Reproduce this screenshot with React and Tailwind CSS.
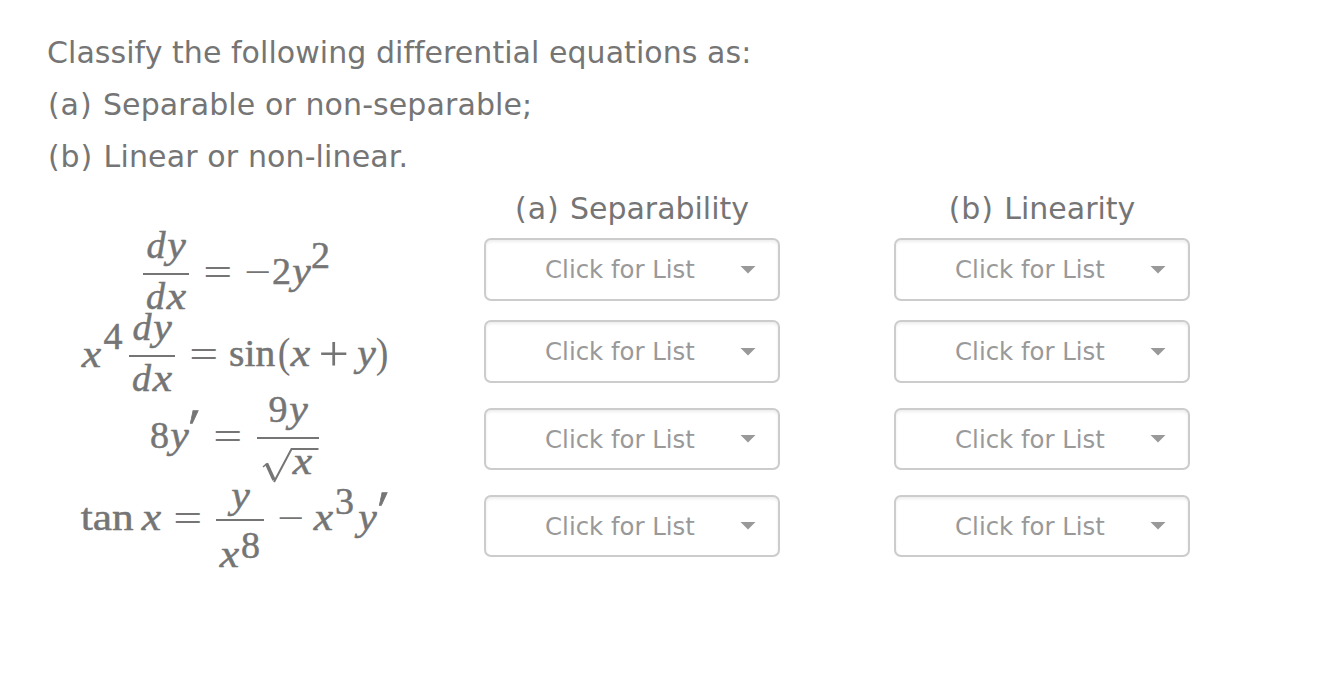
import React from "react";

function Glyph({ className = "", textClassName = "", children }) {
  return (
    <span className={`flex h-[38px] shrink-0 justify-center whitespace-pre leading-[41px] ${className}`}>
      <span className={`block shrink-0 ${textClassName}`}>{children}</span>
    </span>
  );
}

function X({ className = "" }) {
  return <Glyph className={`w-[19px] italic ${className}`} textClassName="scale-x-[1.15]">x</Glyph>;
}

function Y({ className = "" }) {
  return <Glyph className={`w-[18px] italic ${className}`} textClassName="scale-x-110">y</Glyph>;
}

function Equals({ className = "" }) {
  return (
    <Glyph className={`mt-px w-[26px] [-webkit-text-stroke:0px] ${className}`} textClassName="scale-x-[1.35]">=</Glyph>
  );
}

function Minus({ className = "" }) {
  return (
    <Glyph className={`mt-px w-[23px] [-webkit-text-stroke:0px] ${className}`} textClassName="scale-x-[1.25]">−</Glyph>
  );
}

function Prime({ className = "" }) {
  return (
    <Glyph className={`w-[9px] text-[54px] italic [-webkit-text-stroke:0.8px] ${className}`} textClassName="-skew-x-6">′</Glyph>
  );
}

function Fraction({ className = "", top, bottom }) {
  return (
    <span className={`-mt-[26px] flex shrink-0 flex-col ${className}`}>
      <span className="mb-[10px] flex h-[38px] justify-center">{top}</span>
      <span className="h-[2px] bg-[#757575]" />
      <span className="mt-px flex h-[38px] justify-center">{bottom}</span>
    </span>
  );
}

function Derivative({ className = "" }) {
  return (
    <Fraction
      className={`w-[46px] ${className}`}
      top={<><Glyph className="w-[19px] italic">d</Glyph><Y className="ml-[2px]" /></>}
      bottom={<><Glyph className="w-[19px] italic">d</Glyph><X className="ml-[2px]" /></>}
    />
  );
}

function Equation({ className = "", children }) {
  return (
    <div className={`flex w-[379px] shrink-0 items-start font-['Liberation_Serif',serif] text-[38px] text-[#757575] [-webkit-text-stroke:0.5px_#757575] ${className}`}>
      {children}
    </div>
  );
}

function Part({ children }) {
  return <span className="tracking-[0.9px]">{children} </span>;
}

function Select({ className = "h-[63px]" }) {
  return (
    <div className="flex w-[410px] shrink-0 justify-center pt-1">
      <button
        type="button"
        className={`flex w-[296px] items-center rounded-[7px] border-2 border-[#cccccc] bg-white pl-[59px] text-[24.4px] text-[#999999] shadow-[inset_0_2px_3px_rgba(0,0,0,0.07)] ${className}`}
      >
        <span className="w-[150px] whitespace-nowrap pt-[2px] text-center">Click for List</span>
        <svg className="ml-[45px] h-[8px] w-[16px]" viewBox="0 0 16 8" fill="#999999">
          <path d="M0.5 0H15.5L8 7.5Z" />
        </svg>
      </button>
    </div>
  );
}

function Row({ className = "", selectClassName, children }) {
  return (
    <div className={`flex items-start ${className}`}>
      {children}
      <Select className={selectClassName} />
      <Select className={selectClassName} />
    </div>
  );
}

export default function App() {
  return (
    <main className="h-[690px] w-[1332px] overflow-hidden bg-white pl-12 pt-[27px] font-['DejaVu_Sans',sans-serif] text-[#757575]">
      <div className="-mb-px text-[30px] leading-[52px]">
        <p className="-ml-px whitespace-nowrap tracking-[0.05px]">Classify the following differential equations as:</p>
        <p className="tracking-[0.1px]"><Part>(a)</Part>Separable or non-separable;</p>
        <p className="tracking-[0.13px]"><Part>(b)</Part>Linear or non-linear.</p>
        <div className="flex pl-[379px] text-center tracking-[-0.02px]">
          <div className="w-[410px]"><Part>(a)</Part>Separability</div>
          <div className="w-[410px]"><Part>(b)</Part>Linearity</div>
        </div>
      </div>

      <Row className="h-[82px]">
        <Equation className="pl-[95px] pt-[17px]">
          <Derivative />
          <Equals className="ml-4" />
          <Minus className="ml-[15px]" />
          <Glyph className="ml-1 w-[17px]">2</Glyph>
          <Y className="ml-[2px]" />
          <Glyph className="-mt-4 ml-[2px] w-[17px]">2</Glyph>
        </Equation>
      </Row>

      <Row className="h-[88px]">
        <Equation className="pl-[34px] pt-[17px]">
          <X className="mt-px" />
          <Glyph className="-mt-[17px] ml-[3px] w-[18px]">4</Glyph>
          <Derivative className="ml-[7px]" />
          <Equals className="ml-4" />
          <Glyph className="ml-[12px] w-[47px]" textClassName="scale-x-[1.04]">sin</Glyph>
          <Glyph className="ml-[3px] w-[10px] [-webkit-text-stroke:0px]" textClassName="scale-y-110">(</Glyph>
          <X className="ml-[2px]" />
          <Glyph className="ml-[11px] w-[26px] [-webkit-text-stroke:0px]" textClassName="scale-x-[1.42] scale-y-[1.35]">+</Glyph>
          <Y className="ml-[10px]" />
          <Glyph className="ml-[2px] w-[10px] [-webkit-text-stroke:0px]" textClassName="scale-y-110">)</Glyph>
        </Equation>
      </Row>

      <Row className="h-[87px]" selectClassName="h-[62px]">
        <Equation className="pl-[103px] pt-[11px]">
          <Glyph className="w-[17px]">8</Glyph>
          <Y className="ml-[2px]" />
          <Prime className="-mt-[7px] -ml-[3px] mr-[5px]" />
          <Equals className="ml-4" />
          <Fraction
            className="ml-4 w-[62px]"
            top={<><Glyph className="ml-px w-[17px]">9</Glyph><Y className="ml-[3px]" /></>}
            bottom={
              <span className="flex w-[62px] items-start pl-[5px]">
                <svg className="mt-[5px] h-[38px] w-[57px] shrink-0" viewBox="0 0 57 38" fill="none" stroke="#757575">
                  <path d="M1 22L5 18.5" strokeWidth="1.5" />
                  <path d="M4.5 18.5L12 35" strokeWidth="3.5" />
                  <path d="M12 37L29.5 4H56.5" strokeWidth="2" />
                </svg>
                <X className="-ml-[26px] mt-px" />
              </span>
            }
          />
        </Equation>
      </Row>

      <Row className="h-[82px]" selectClassName="h-[62px]">
        <Equation className="pl-[33px] pt-[6px]">
          <Glyph className="w-[53px]" textClassName="scale-x-[1.14]">tan</Glyph>
          <X className="ml-[8px]" />
          <Equals className="ml-[14px]" />
          <Fraction
            className="ml-[15px] w-[48px]"
            top={<Y className="mt-[4px]" />}
            bottom={
              <span className="flex items-start">
                <X className="mt-[12px]" />
                <Glyph className="ml-[3px] mr-px mt-[3px] w-[17px]">8</Glyph>
              </span>
            }
          />
          <Minus className="ml-[15px]" />
          <X className="ml-3" />
          <Glyph className="-mt-[16px] ml-[3px] w-[17px]">3</Glyph>
          <Y className="ml-[5px]" />
          <Prime className="-mt-[7px] -ml-[2px]" />
        </Equation>
      </Row>
    </main>
  );
}
